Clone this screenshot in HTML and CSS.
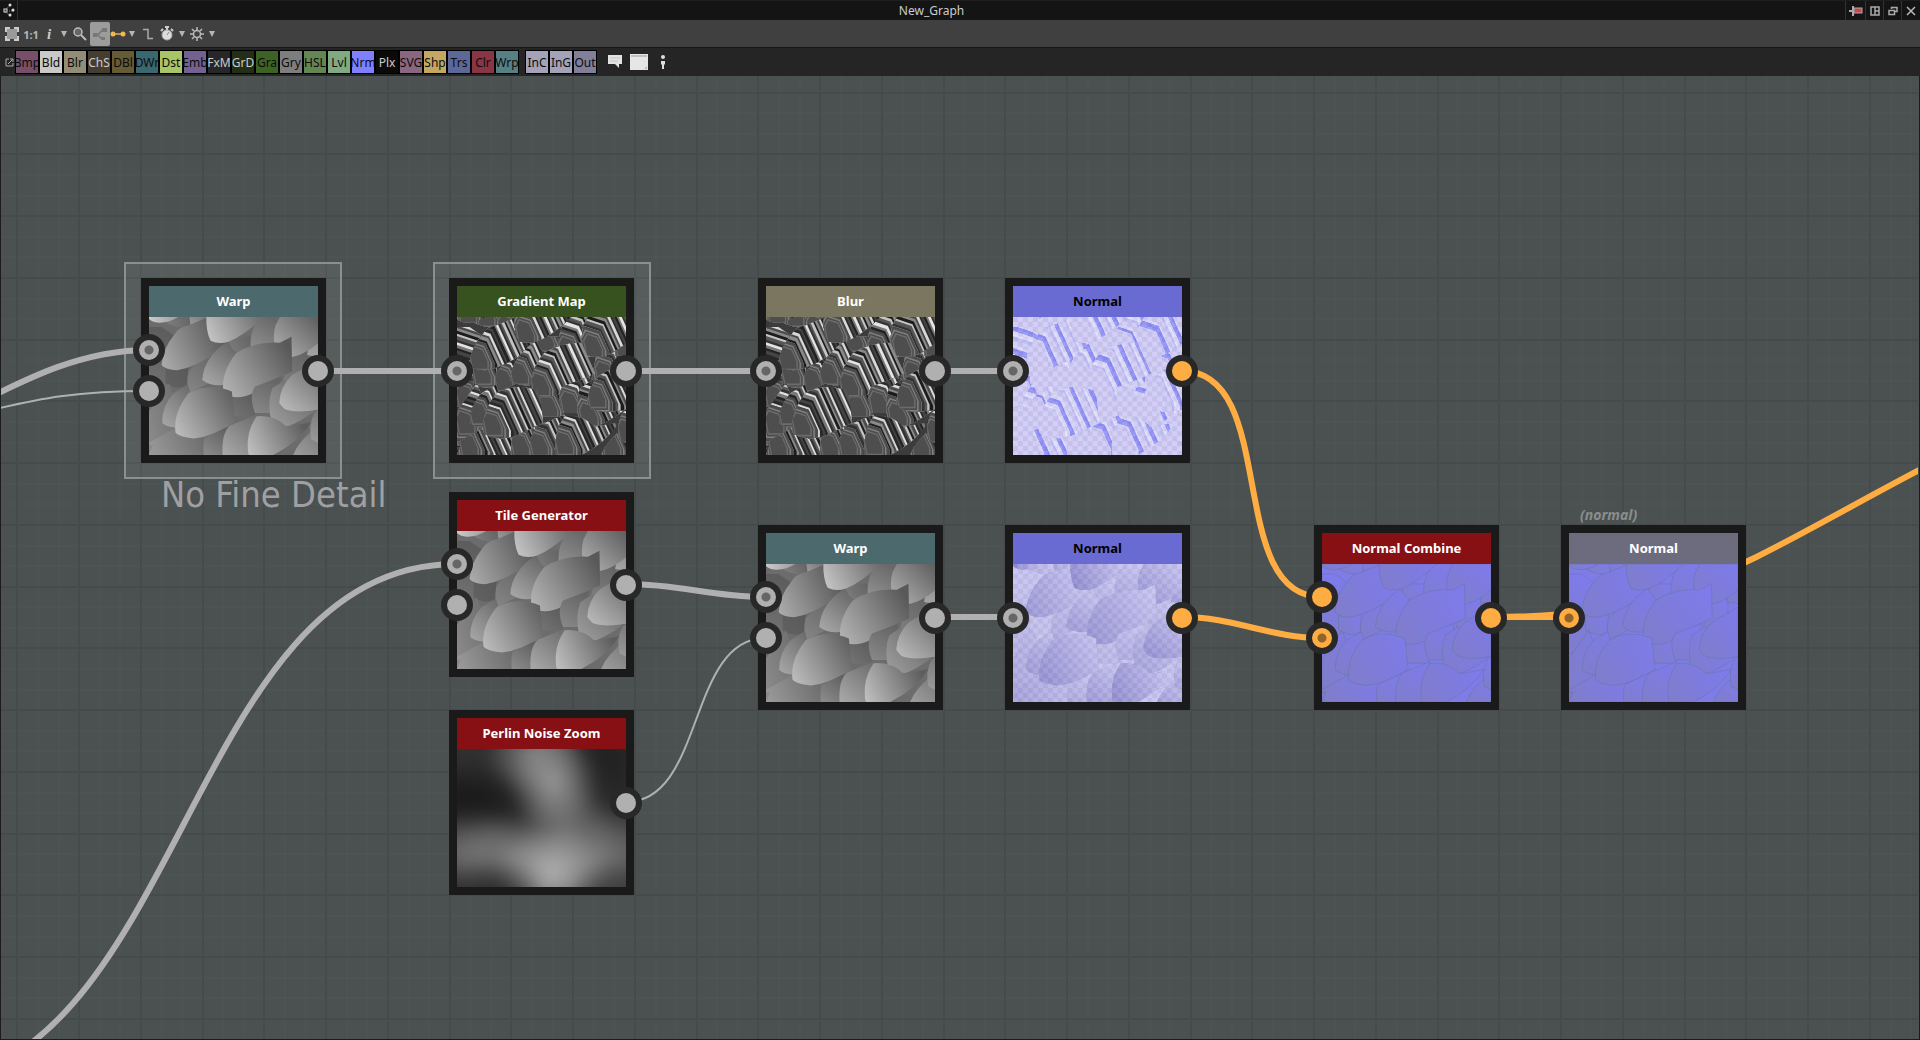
FILE: index.html
```html
<!DOCTYPE html>
<html lang="en">
<head>
    <meta charset="UTF-8">
    <meta name="viewport" content="width=device-width, initial-scale=1.0">
    <title>New_Graph</title>
    <link rel="stylesheet" href="styles.css">
</head>
<body>
    <header class="titlebar">
        <div class="app-icon">
            <svg width="14" height="14" viewBox="0 0 14 14">
                <path d="M3 8L7 3M7 8H12M3 9L8 12" stroke="#777" stroke-dasharray="1 1" fill="none"/>
                <rect x="2" y="6" width="3" height="3" fill="none" stroke="#ddd"/>
                <circle cx="8" cy="2" r="1.5" fill="#ddd"/>
                <circle cx="11" cy="7" r="1.5" fill="#ddd"/>
                <circle cx="8" cy="12" r="1.5" fill="#ddd"/>
            </svg>
        </div>
        <h1>New_Graph</h1>
        <div class="window-buttons">
            <button aria-label="Pin"><svg width="16" height="12" viewBox="0 0 16 12"><path d="M1 6H6" stroke="#aaa" stroke-width="2"/><path d="M5 1V11" stroke="#aaa" stroke-width="2"/><rect x="6" y="3" width="8" height="5" fill="#c8474b" stroke="#aaa"/></svg></button>
            <button aria-label="Dock"><svg width="10" height="10" viewBox="0 0 10 10"><path d="M1 1H9V9H1ZM5 1V9M5 5H9" fill="none" stroke="#aaa" stroke-width="1.5"/></svg></button>
            <button aria-label="Restore"><svg width="10" height="10" viewBox="0 0 10 10"><path d="M3.5 3V1.5H9V5.5H7M1 4.5H6.5V8.5H1Z" fill="none" stroke="#aaa" stroke-width="1.5"/></svg></button>
            <button aria-label="Close"><svg width="10" height="10" viewBox="0 0 10 10"><path d="M1 1L9 9M9 1L1 9" stroke="#bbb" stroke-width="1.5"/></svg></button>
        </div>
    </header>

    <nav class="toolbar">
        <button class="w20" aria-label="Fit view"><svg width="14" height="14" viewBox="0 0 14 14"><rect x="2" y="2" width="10" height="10" fill="#9a9a9a"/><path d="M1 5V1H5M9 1H13V5M13 9V13H9M5 13H1V9" fill="none" stroke="#ccc" stroke-width="2"/></svg></button>
        <button class="w18 ratio">1:1</button>
        <button class="w18 info">i</button>
        <button class="w12" aria-label="Info options"><svg width="6" height="6" viewBox="0 0 6 6"><path d="M0 0H6L3 6Z" fill="#b5b5b5"/></svg></button>
        <button class="w20" aria-label="Search"><svg width="14" height="14" viewBox="0 0 14 14"><circle cx="5" cy="5" r="4" fill="#666" stroke="#bbb" stroke-width="1.5"/><path d="M8 8L13 13" stroke="#bbb" stroke-width="2"/></svg></button>
        <button class="w20 selected" aria-label="Node links"><svg width="16" height="16" viewBox="0 0 16 16"><path d="M4 9C9 9 7 4 12 4M4 9C8 9 8 13 11 13" stroke="#777" stroke-width="1.5" fill="none"/><path d="M1 7H5V11H1ZM10 2H15V6H10ZM9 11H13V14H9Z" fill="#777"/></svg></button>
        <button class="w16" aria-label="Link style"><svg width="16" height="8" viewBox="0 0 16 8"><path d="M2 4H14" stroke="#e8b04c" stroke-width="1.5"/><circle cx="3" cy="4" r="2.5" fill="#f0b850"/><circle cx="13" cy="4" r="2.5" fill="#f0b850"/></svg></button>
        <button class="w12" aria-label="Link options"><svg width="6" height="6" viewBox="0 0 6 6"><path d="M0 0H6L3 6Z" fill="#b5b5b5"/></svg></button>
        <button class="w20" aria-label="Elbow link"><svg width="12" height="12" viewBox="0 0 12 12"><path d="M1 1.5H6V10.5H11" fill="none" stroke="#aaa" stroke-width="1.5"/></svg></button>
        <button class="w18" aria-label="Timings"><svg width="14" height="16" viewBox="0 0 14 16"><circle cx="7" cy="9" r="5" fill="#ddd" stroke="#aaa"/><path d="M5 1H9M7 1V4M11 3L13 5M3 3L1 5" stroke="#ccc" stroke-width="2"/><path d="M7 9L9 6" stroke="#888"/></svg></button>
        <button class="w12" aria-label="Timing options"><svg width="6" height="6" viewBox="0 0 6 6"><path d="M0 0H6L3 6Z" fill="#b5b5b5"/></svg></button>
        <button class="w18" aria-label="Settings"><svg width="14" height="14" viewBox="0 0 14 14"><circle cx="7" cy="7" r="3.5" fill="none" stroke="#bbb" stroke-width="1.5"/><path d="M7 0V3M7 11V14M0 7H3M11 7H14M2 2L4 4M10 10L12 12M12 2L10 4M4 10L2 12" stroke="#bbb" stroke-width="1.5"/></svg></button>
        <button class="w12" aria-label="Settings options"><svg width="6" height="6" viewBox="0 0 6 6"><path d="M0 0H6L3 6Z" fill="#b5b5b5"/></svg></button>
    </nav>

    <nav class="palette">
        <button class="popout" aria-label="Undock"><svg width="9" height="9" viewBox="0 0 9 9"><path d="M4 1H1V8H8V5M3 6L8 1M5 1H8V4" fill="none" stroke="#aaa"/></svg></button>
        <div class="group">
            <button class="atom bmp">Bmp</button>
            <button class="atom bld">Bld</button>
            <button class="atom blr">Blr</button>
            <button class="atom chs">ChS</button>
            <button class="atom dbl">DBl</button>
            <button class="atom dwr">DWr</button>
            <button class="atom dst">Dst</button>
            <button class="atom emb">Emb</button>
            <button class="atom fxm">FxM</button>
            <button class="atom grd">GrD</button>
            <button class="atom gra">Gra</button>
            <button class="atom gry">Gry</button>
            <button class="atom hsl">HSL</button>
            <button class="atom lvl">Lvl</button>
            <button class="atom nrm">Nrm</button>
            <button class="atom plx">Plx</button>
            <button class="atom svg">SVG</button>
            <button class="atom shp">Shp</button>
            <button class="atom trs">Trs</button>
            <button class="atom clr">Clr</button>
            <button class="atom wrp">Wrp</button>
        </div>
        <div class="group">
            <button class="atom inp">InC</button>
            <button class="atom inp">InG</button>
            <button class="atom out">Out</button>
        </div>
        <div class="group extras">
            <button aria-label="Comment"><svg width="16" height="14" viewBox="0 0 16 14"><path d="M1 0H15V9H12V13L8 9H1Z" fill="#e2e2e2"/><path d="M3 3H13M3 6H11" stroke="#c4c4c4"/></svg></button>
            <button aria-label="Frame"><svg width="18" height="16" viewBox="0 0 18 16"><rect width="18" height="16" fill="#e6e6e6"/><path d="M1 2H17" stroke="#999"/><path d="M17 12V15H14Z" fill="#bbb"/></svg></button>
            <button aria-label="Pin node"><svg width="6" height="14" viewBox="0 0 6 14"><circle cx="3" cy="2" r="2" fill="#ddd"/><path d="M1 6H5V9L4 10V14H2V10L1 9Z" fill="#ddd"/></svg></button>
        </div>
    </nav>

    <main class="graph">
        <svg class="layer" width="100%" height="100%">
            <defs>
                <pattern id="grid" x="141" y="202" width="247" height="247" patternUnits="userSpaceOnUse">
                    <path class="minor" d="M21 0V247M41 0V247M82 0V247M103 0V247M144 0V247M165 0V247M206 0V247M226 0V247M0 21H247M0 41H247M0 82H247M0 103H247M0 144H247M0 165H247M0 206H247M0 226H247"/>
                    <path class="major" d="M0 0V247M62 0V247M123 0V247M185 0V247M247 0V247M0 0H247M0 62H247M0 123H247M0 185H247M0 247H247"/>
                </pattern>
            </defs>
            <rect width="100%" height="100%" fill="url(#grid)"/>
        </svg>

        <div class="frame frame-warp"></div>
        <div class="frame frame-gradient"></div>

        <svg class="layer wires" width="100%" height="100%">
            <path d="M-200 384C-68 384 17 274 149 274"/>
            <path class="thin" d="M-150 349C0 349 0 315 149 315"/>
            <path d="M318 295H457"/>
            <path d="M626 295H766"/>
            <path d="M935 295H1013"/>
            <path d="M-90 1009C185 1009 182 488 457 488"/>
            <path d="M626 508C682 508 710 521 766 521"/>
            <path class="thin" d="M626 726C705 726 687 562 766 562"/>
            <path d="M935 541H1013"/>
            <path class="color" d="M1182 295C1280 295 1224 521 1322 521"/>
            <path class="color" d="M1182 541C1234 541 1270 562 1322 562"/>
            <path class="color" d="M1491 541H1569"/>
            <path class="color" d="M1491 541C1680 541 1740 488 1925 391"/>
        </svg>

        <p class="comment">No Fine Detail</p>
        <p class="usage">(normal)</p>

        <section class="node warp-a">
            <h2 class="teal">Warp</h2>
            <canvas width="169" height="138" data-thumb="feathers"></canvas>
            <i class="port in upper primary"></i><i class="port in lower"></i><i class="port result"></i>
        </section>
        <section class="node gradient-map">
            <h2 class="green">Gradient Map</h2>
            <canvas width="169" height="138" data-thumb="bands"></canvas>
            <i class="port in middle primary"></i><i class="port result"></i>
        </section>
        <section class="node blur">
            <h2 class="olive">Blur</h2>
            <canvas width="169" height="138" data-thumb="bands"></canvas>
            <i class="port in middle primary"></i><i class="port result"></i>
        </section>
        <section class="node normal-a">
            <h2 class="violet">Normal</h2>
            <canvas width="169" height="138" data-thumb="normalBands"></canvas>
            <i class="port in middle primary"></i><i class="port result color"></i>
        </section>
        <section class="node tile-generator">
            <h2 class="red">Tile Generator</h2>
            <canvas width="169" height="138" data-thumb="feathers"></canvas>
            <i class="port in upper primary"></i><i class="port in lower"></i><i class="port result"></i>
        </section>
        <section class="node perlin">
            <h2 class="red">Perlin Noise Zoom</h2>
            <canvas width="169" height="138" data-thumb="noise"></canvas>
            <i class="port result"></i>
        </section>
        <section class="node warp-b">
            <h2 class="teal">Warp</h2>
            <canvas width="169" height="138" data-thumb="feathers"></canvas>
            <i class="port in upper primary"></i><i class="port in lower"></i><i class="port result"></i>
        </section>
        <section class="node normal-b">
            <h2 class="violet">Normal</h2>
            <canvas width="169" height="138" data-thumb="normalFeathers"></canvas>
            <i class="port in middle primary"></i><i class="port result color"></i>
        </section>
        <section class="node combine">
            <h2 class="red">Normal Combine</h2>
            <canvas width="169" height="138" data-thumb="combined"></canvas>
            <i class="port in upper color"></i><i class="port in lower primary color"></i><i class="port result color"></i>
        </section>
        <section class="node output">
            <h2 class="grey">Normal</h2>
            <canvas width="169" height="138" data-thumb="combined"></canvas>
            <i class="port in middle primary color"></i>
        </section>
    </main>

    <script src="thumbs.js"></script>
</body>
</html>
```

FILE: styles.css
```css
* {
    box-sizing: border-box;
}
body {
    margin: 0;
    height: 100vh;
    display: flex;
    flex-direction: column;
    background-color: #252525;
    color: #ccc;
    font-family: "Noto Sans", "Open Sans", sans-serif;
    font-size: 12px;
}
h1, h2, p {
    margin: 0;
}
button {
    display: flex;
    align-items: center;
    justify-content: center;
    flex: none;
    padding: 0;
    border: none;
    background: none;
    color: inherit;
    font: inherit;
    overflow: hidden;
}

/* title bar */
.titlebar {
    display: flex;
    flex: none;
    height: 20px;
    background-color: #141414;
    border-top: 1px solid #1e1e1e;
}
.app-icon {
    width: 18px;
    padding: 2px;
    border-right: 1px solid #333;
}
.titlebar h1 {
    flex: 1;
    text-align: center;
    font-size: 12px;
    line-height: 20px;
    font-weight: normal;
}
.window-buttons {
    display: flex;
    padding-right: 1px;
}
.window-buttons button {
    width: 18px;
    border-left: 1px solid #333;
}
.window-buttons button:first-child {
    width: 20px;
}

/* tool bar */
.toolbar {
    display: flex;
    flex: none;
    height: 28px;
    padding: 2px 2px 1px;
    background-color: #404040;
    border-bottom: 1px solid #161616;
}
.w12 { width: 12px; }
.w16 { width: 16px; }
.w18 { width: 18px; }
.w20 { width: 20px; }
.ratio {
    font-size: 11px;
    font-weight: bold;
    color: #b5b5b5;
}
.info {
    font-family: "Liberation Serif", serif;
    font-size: 15px;
    font-style: italic;
    font-weight: bold;
}
.selected {
    background-color: #9c9c9c;
    border-radius: 2px;
}

/* node palette */
.palette {
    display: flex;
    flex: none;
    align-items: center;
    height: 28px;
    padding-left: 3px;
}
.popout {
    width: 12px;
}
.group {
    display: flex;
    margin-right: 6px;
}
.atom {
    width: 24px;
    height: 24px;
    border: 1px solid #000;
    color: #0c0c0c;
    font-size: 12px;
}
.bmp { background-color: #774f69; }
.bld { background-color: #c9c9c9; }
.blr { background-color: #928d74; }
.chs { background-color: #463d31; color: #ccc; }
.dbl { background-color: #655b35; }
.dwr { background-color: #3a6870; }
.dst { background-color: #a9c667; }
.emb { background-color: #73618f; }
.fxm { background-color: #27272a; color: #ccc; }
.grd { background-color: #222e15; color: #ccc; }
.gra { background-color: #3c6323; }
.gry { background-color: #7e7e7e; }
.hsl { background-color: #648653; }
.lvl { background-color: #80aa82; }
.nrm { background-color: #8080ff; }
.plx { background-color: #0a0a0a; color: #ccc; }
.svg { background-color: #8a6680; }
.shp { background-color: #c4a862; }
.trs { background-color: #5c6897; }
.clr { background-color: #8a3545; }
.wrp { background-color: #578085; }
.inp { background-color: #a3a2b6; }
.out { background-color: #817f99; }
.extras {
    margin-left: 4px;
    gap: 7px;
}
.extras button:last-child {
    margin-left: 5px;
}

/* graph view */
.graph {
    position: relative;
    flex: 1;
    overflow: hidden;
    background-color: #4a5150;
    border: solid #1c1c1c;
    border-width: 0 1px 1px;
}
.layer {
    position: absolute;
    top: 0;
    left: -1px;
}
.minor {
    stroke: #4e5655;
    stroke-width: 1;
}
.major {
    stroke: #444b4a;
    stroke-width: 2;
}
.wires {
    fill: none;
    stroke: #b0b0b0;
    stroke-width: 6;
}
.wires .thin {
    stroke-width: 2;
}
.wires .color {
    stroke: #ffad42;
}
.frame {
    position: absolute;
    top: 186px;
    width: 218px;
    height: 217px;
    border: 2px solid #8c8f8f;
    background-color: rgba(255, 255, 255, 0.07);
}
.frame-warp { left: 123px; }
.frame-gradient { left: 432px; }
.comment {
    position: absolute;
    left: 160px;
    top: 393px;
    color: #a0a0a2;
    font-family: "DejaVu Sans Condensed", "DejaVu Sans", sans-serif;
    font-size: 36px;
    line-height: 52px;
}
.usage {
    position: absolute;
    left: 1579px;
    top: 430px;
    color: #8b8d8d;
    font-size: 14px;
    line-height: 18px;
    font-style: italic;
    font-weight: bold;
}

/* nodes */
.node {
    position: absolute;
    width: 185px;
    border: 8px solid #1a1a1a;
}
.warp-a { left: 140px; top: 202px; }
.gradient-map { left: 448px; top: 202px; }
.blur { left: 757px; top: 202px; }
.normal-a { left: 1004px; top: 202px; }
.tile-generator { left: 448px; top: 416px; }
.perlin { left: 448px; top: 634px; }
.warp-b { left: 757px; top: 449px; }
.normal-b { left: 1004px; top: 449px; }
.combine { left: 1313px; top: 449px; }
.output { left: 1560px; top: 449px; }
.node h2 {
    height: 31px;
    text-align: center;
    color: #fff;
    font-size: 13px;
    line-height: 31px;
    font-weight: bold;
}
.node canvas {
    display: block;
}
.node .teal { background-color: #4c696e; }
.node .green { background-color: #37521f; }
.node .olive { background-color: #7b765f; }
.node .violet { background-color: #6a6bd2; color: #000; }
.node .red { background-color: #861014; }
.node .grey { background-color: #6d6c7f; }

/* connectors */
.port {
    position: absolute;
    width: 32px;
    height: 32px;
    border: 6px solid #282828;
    border-radius: 50%;
    background-color: #b0b0b0;
}
.port.color { background-color: #ffad42; }
.port.in { left: -16px; }
.port.result { right: -16px; top: 69px; }
.port.upper { top: 48px; }
.port.middle { top: 69px; }
.port.lower { top: 89px; }
.port.primary {
    background-image: radial-gradient(circle, #666 4px, transparent 5px);
}
.port.primary.color {
    background-image: radial-gradient(circle, #91632a 4px, transparent 5px);
}
```

FILE: thumbs.js
```js
// Feathers, back to front: outline, tip, far end, light at the tip, light at the end.
// Coordinates are in a 510 x 417 space.
const feathers = [
    ['M0 30L38 30L80 60L60 190Q50 260 0 272Z', 0, 270, 80, 60, 125, 90],
    ['M50 150L120 150L115 205Q90 225 50 200Z', 50, 200, 120, 150, 95, 85],
    ['M0 285L60 200L110 330L180 340L165 417H0Z', 0, 350, 170, 300, 145, 95],
    ['M0 417L12 385Q0 395 0 380L80 335L200 345L180 417Z', 10, 417, 200, 330, 165, 95],
    ['M45 0H125V30Q80 36 45 12Z', 60, 25, 120, 0, 130, 100],
    ['M0 0H88Q60 18 30 17Q8 15 0 6Z', 5, 15, 85, 0, 225, 170],
    ['M160 120L215 90L230 130L180 200L120 230Q112 190 120 165Z', 115, 220, 210, 100, 140, 95],
    ['M240 60L330 60L300 110L265 108Q242 100 240 75Z', 240, 100, 300, 60, 130, 100],
    ['M432 60H480V170L400 220Z', 420, 200, 480, 120, 130, 100],
    ['M250 230H330L320 300L250 300Z', 250, 300, 330, 220, 120, 80],
    ['M122 0H190L188 60Q145 66 129 50Z', 125, 60, 190, 0, 190, 110],
    ['M38 145Q42 95 75 55Q90 30 120 25L180 0L250 60L213 100Q150 150 85 161Q50 160 38 145Z', 40, 155, 220, 70, 190, 90],
    ['M161 190Q165 120 240 72Q245 95 265 108L230 205Q185 210 161 190Z', 162, 200, 255, 90, 185, 105],
    ['M310 115Q298 55 327 12L345 0H400V120Q350 135 318 122Z', 310, 125, 380, 10, 165, 105],
    ['M173 0Q172 45 186 72Q210 84 240 75Q290 55 345 0Z', 180, 75, 330, 0, 222, 115],
    ['M477 115Q485 55 510 30V120Z', 478, 115, 510, 40, 180, 140],
    ['M385 112Q370 60 382 25L395 0H510V80Q465 115 435 120Q410 124 385 112Z', 385, 118, 500, 0, 195, 95],
    ['M225 230Q215 170 262 110Q320 72 395 78L430 60L432 165Q365 190 315 230Q280 250 228 238Z', 226, 235, 430, 110, 200, 85],
    ['M320 290Q300 240 320 210L400 180L380 290Z', 315, 290, 380, 190, 145, 100],
    ['M370 320Q355 260 372 215L410 190L500 285Q450 320 420 330Q390 332 378 322Z', 372, 325, 480, 230, 170, 110],
    ['M393 260Q395 210 432 175L510 130V280Q440 292 408 277Z', 395, 270, 510, 150, 205, 110],
    ['M40 320Q38 270 75 230L118 205L150 320L80 335Q50 330 40 320Z', 40, 320, 150, 220, 180, 100],
    ['M80 350Q72 290 120 230Q180 195 250 225L260 318Q200 360 135 367Q90 362 80 350Z', 82, 355, 270, 250, 210, 90],
    ['M165 417Q163 380 168 365L240 330L230 417Z', 165, 417, 230, 340, 150, 95],
    ['M222 417Q218 350 245 328L325 295L310 417Z', 222, 415, 320, 310, 185, 115],
    ['M435 417Q450 375 510 330V417Z', 440, 417, 510, 340, 170, 125],
    ['M490 370Q480 320 500 290L510 280V380Z', 488, 375, 510, 290, 165, 130],
    ['M300 415Q290 350 325 300Q380 295 415 332L490 318Q450 380 375 417H305Z', 298, 412, 470, 330, 215, 90]
];

function grey(v) {
    const level = Math.round(106 + (v - 106) * 0.8);
    return `rgb(${level}, ${level}, ${level})`;
}

function layer() {
    const canvas = document.createElement('canvas');
    canvas.width = 510;
    canvas.height = 417;
    return canvas;
}

function checker(ctx) {
    ctx.fillStyle = '#e0e0ec';
    ctx.fillRect(0, 0, 510, 417);
    ctx.fillStyle = '#b0b0c2';
    for (let y = 0; y < 28; y++) {
        for (let x = y % 2; x < 34; x += 2) {
            ctx.fillRect(x * 15, y * 15, 15, 15);
        }
    }
}

function shade(ctx, f, from, to) {
    const g = ctx.createLinearGradient(f[1], f[2], f[3], f[4]);
    g.addColorStop(0, from);
    g.addColorStop(1, to);
    return g;
}

// Lopsided hexagon that the bands of one feather follow.
function facet(ctx, x, y, r) {
    ctx.beginPath();
    ctx.moveTo(x - r * 0.8, y - r * 0.5);
    ctx.lineTo(x - r * 0.5, y - r * 1.1);
    ctx.lineTo(x + r * 0.4, y - r * 0.8);
    ctx.lineTo(x + r * 0.9, y + r * 0.3);
    ctx.lineTo(x + r * 0.9, y + r);
    ctx.lineTo(x - r * 0.5, y + r);
    ctx.closePath();
}

function bands(ctx, palette, core) {
    feathers.forEach((f, n) => {
        ctx.save();
        ctx.clip(new Path2D(f[0]));
        const x = f[1] + 24;
        const y = f[2] - 30;
        let k = n * 3;
        for (let r = 240; r > 54; r -= [10, 7, 12, 8, 9][k % 5]) {
            facet(ctx, x, y, r);
            ctx.fillStyle = palette[k % palette.length];
            ctx.fill();
            k++;
        }
        core.forEach((c, i) => {
            facet(ctx, x, y, 56 - i * 5);
            ctx.fillStyle = c;
            ctx.fill();
        });
        ctx.restore();
    });
}

const draw = {
    feathers(ctx) {
        ctx.fillStyle = '#6c6c6c';
        ctx.fillRect(0, 0, 510, 417);
        for (const f of feathers) {
            ctx.fillStyle = shade(ctx, f, grey(f[5]), grey(f[6]));
            ctx.fill(new Path2D(f[0]));
        }
    },
    bands(ctx) {
        ctx.fillStyle = '#3c3c3c';
        ctx.fillRect(0, 0, 510, 417);
        bands(ctx, [
            '#2a2a2a', '#d8d8d8', '#4a4a4a', '#8a8a8a', '#1c1c1c', '#c4c4c4',
            '#555', '#333', '#e4e4e4', '#787878', '#222', '#444'
        ], ['#484848', '#505050', '#808080', '#4c4c4c', '#6c6c6c', '#4e4e4e']);
    },
    normalBands(ctx) {
        checker(ctx);
        const top = layer();
        const paint = top.getContext('2d');
        paint.fillStyle = '#cdc8fa';
        paint.fillRect(0, 0, 510, 417);
        bands(paint, [
            '#cdc8fa', '#dcd8ff', '#7878ff', '#8484ff', '#d8d4ff', '#e4e2ff', '#b8b4ff', '#cdc8fa'
        ], ['#cdc8fa', '#c4c0fa', '#cdc8fa']);
        ctx.globalAlpha = 0.72;
        ctx.drawImage(top, 0, 0);
    },
    normalFeathers(ctx) {
        checker(ctx);
        const top = layer();
        const paint = top.getContext('2d');
        paint.fillStyle = '#c4bff5';
        paint.fillRect(0, 0, 510, 417);
        for (const f of feathers) {
            const path = new Path2D(f[0]);
            const dark = Math.round((f[5] - 90) / 2);
            paint.fillStyle = shade(paint, f, `rgb(${194 - dark}, ${188 - dark}, ${236 - Math.round(dark / 2)})`, '#c4bff4');
            paint.fill(path);
            paint.strokeStyle = 'rgba(140, 155, 190, 0.3)';
            paint.lineWidth = 2;
            paint.stroke(path);
        }
        ctx.globalAlpha = 0.75;
        ctx.drawImage(top, 0, 0);
    },
    combined(ctx) {
        ctx.fillStyle = '#7f7ce8';
        ctx.fillRect(0, 0, 510, 417);
        feathers.forEach((f, n) => {
            const path = new Path2D(f[0]);
            ctx.save();
            ctx.clip(path);
            ctx.fillStyle = shade(ctx, f, '#7f7dcb', '#7f7bea');
            ctx.fillRect(0, 0, 510, 417);
            ctx.lineWidth = 2;
            for (let r = 70; r < 220; r += 13) {
                ctx.strokeStyle = (r + n) % 2 ? 'rgba(90, 135, 225, 0.35)' : 'rgba(150, 105, 230, 0.35)';
                facet(ctx, f[1] + 28, f[2] - 24, r);
                ctx.stroke();
            }
            ctx.restore();
            ctx.strokeStyle = 'rgba(90, 115, 150, 0.6)';
            ctx.lineWidth = 2;
            ctx.stroke(path);
        });
    },
    noise(ctx) {
        const top = layer();
        const paint = top.getContext('2d');
        paint.fillStyle = '#303030';
        paint.fillRect(0, 0, 510, 417);
        // x, y, x radius, y radius, level
        const blobs = [
            [60, 150, 230, 110, 20], [450, 40, 120, 190, 30],
            [60, 310, 220, 120, 120], [160, 310, 200, 110, 125],
            [430, 310, 200, 130, 135], [330, 250, 150, 150, 120],
            [230, 30, 140, 120, 140], [290, 110, 130, 140, 170],
            [285, 370, 170, 140, 200],
            [110, 415, 150, 90, 40], [455, 415, 110, 70, 65]
        ];
        for (const [x, y, rx, ry, v] of blobs) {
            paint.save();
            paint.translate(x, y);
            paint.scale(rx, ry);
            const g = paint.createRadialGradient(0, 0, 0, 0, 0, 1);
            g.addColorStop(0, `rgba(${v}, ${v}, ${v}, 0.85)`);
            g.addColorStop(0.5, `rgba(${v}, ${v}, ${v}, 0.45)`);
            g.addColorStop(1, `rgba(${v}, ${v}, ${v}, 0)`);
            paint.fillStyle = g;
            paint.fillRect(-1, -1, 2, 2);
            paint.restore();
        }
        ctx.drawImage(top, 0, 0);
        ctx.filter = 'blur(8px)';
        ctx.drawImage(top, -10, -10, 530, 437);
    }
};

document.querySelectorAll('canvas[data-thumb]').forEach((canvas) => {
    const ctx = canvas.getContext('2d');
    ctx.scale(169 / 510, 138 / 417);
    draw[canvas.dataset.thumb](ctx);
});
```
